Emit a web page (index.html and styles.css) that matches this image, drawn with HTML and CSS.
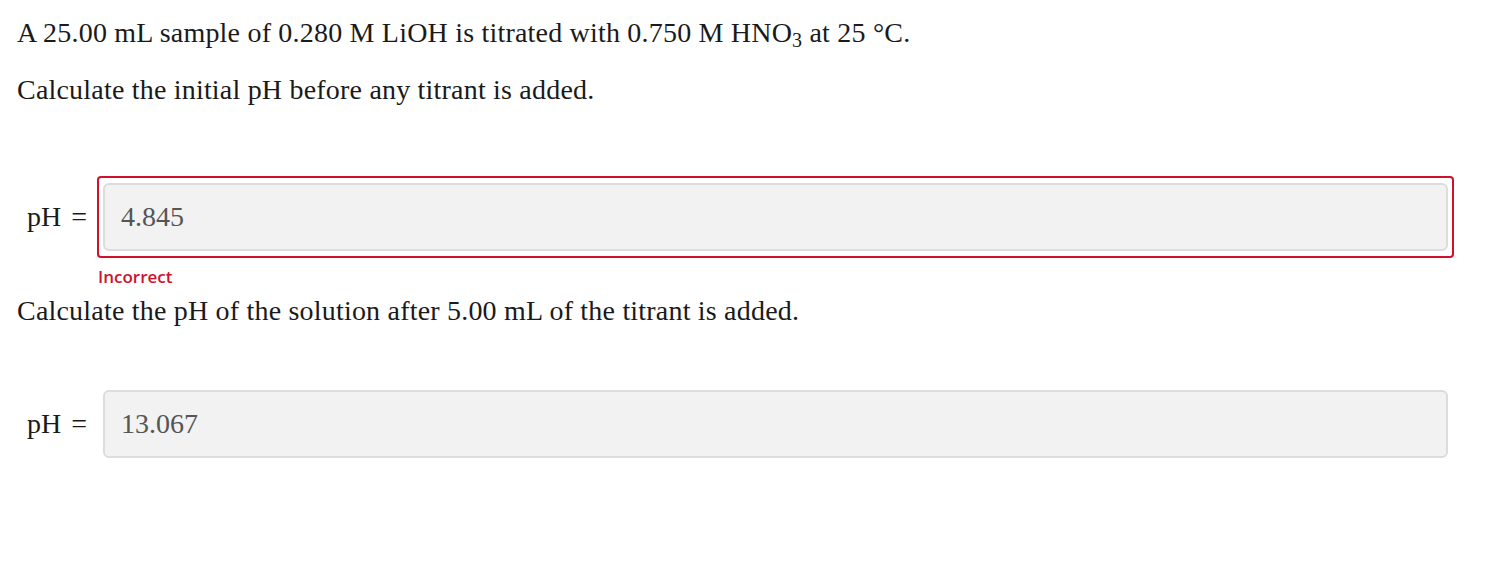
FILE: index.html
```html
<!DOCTYPE html>
<html>
<head>
<meta charset="utf-8">
<link rel="stylesheet" href="styles.css">
</head>
<body>
<div class="page">
  <p class="q q1">A 25.00 mL sample of 0.280 M LiOH is titrated with 0.750 M HNO<sub>3</sub> at 25 °C.</p>
  <p class="q q2">Calculate the initial pH before any titrant is added.</p>
  <div class="row row1">
    <span class="label">pH =</span>
    <div class="field error">
      <div class="input">4.845</div>
    </div>
  </div>
  <div class="feedback">Incorrect</div>
  <p class="q q3">Calculate the pH of the solution after 5.00 mL of the titrant is added.</p>
  <div class="row row2">
    <span class="label">pH =</span>
    <div class="field">
      <div class="input">13.067</div>
    </div>
  </div>
</div>
</body>
</html>
```
FILE: styles.css
```css
html, body {
  margin: 0;
  padding: 0;
  background: #ffffff;
}
.page {
  padding: 18px 35px 0 17px;
  font-family: "Liberation Serif", "Times New Roman", serif;
  color: #1a1a1a;
}
.q {
  margin: 0;
  font-size: 28px;
  line-height: 30px;
  letter-spacing: 0.2px;
}
.q sub {
  font-size: 20px;
  line-height: 0;
  vertical-align: -5px;
}
.q2 {
  margin-top: 27px;
}
.row {
  display: flex;
  align-items: center;
}
.row1 {
  margin-top: 71px;
}
.row2 {
  margin-top: 57px;
}
.label {
  width: 70px;
  padding-left: 10px;
  font-size: 28px;
  line-height: 30px;
  word-spacing: 3px;
  white-space: nowrap;
}
.field {
  flex: 1;
  border: 2px solid transparent;
  border-radius: 4px;
  padding: 5px 4px 5px 4px;
}
.field.error {
  border-color: #d0112b;
}
.input {
  height: 64px;
  border: 2px solid #dcdcdc;
  border-radius: 6px;
  background: #f2f2f2;
  display: flex;
  align-items: center;
  padding-left: 16px;
  font-size: 28px;
  color: #555555;
}
.feedback {
  margin-left: 81px;
  margin-top: 9px;
  font-family: "Open Sans", "Noto Sans", sans-serif;
  font-weight: 600;
  font-size: 17px;
  line-height: 20px;
  color: #d0112b;
}
.q3 {
  margin-top: 9px;
}
```
